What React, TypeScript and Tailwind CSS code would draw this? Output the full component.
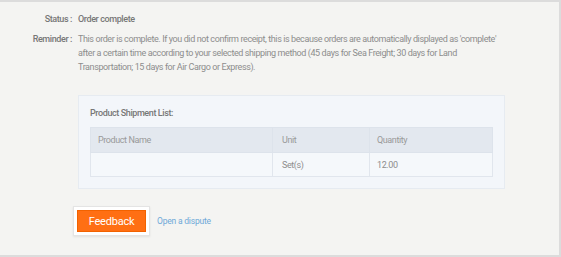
import React from 'react';

const rows = [{ name: '', unit: 'Set(s)', qty: '12.00' }];

export default function App() {
  return (
    <div
      className="w-[561px] h-[257px] bg-[#f4f4f2] border-t-2 border-r-2 border-b-2 border-[#dcdcdc] text-[9px] tracking-[-0.4px] leading-[14px] text-[#8d8d8d]"
      style={{ fontFamily: 'Roboto, "Liberation Sans", sans-serif' }}
    >
      <div className="pt-[10px] pr-[24px]">
        {/* status */}
        <div className="flex">
          <div className="w-[78px] shrink-0 text-right pr-[6px] text-[#777] font-medium">Status :</div>
          <div className="font-medium text-[#777]">Order complete</div>
        </div>
        <div className="flex mt-[6px]">
          <div className="w-[78px] shrink-0 text-right pr-[6px] text-[#777] font-medium">Reminder :</div>
          <div className="whitespace-nowrap">
            This order is complete. If you did not confirm receipt, this is because orders are automatically displayed as 'complete'
            <br />
            after a certain time according to your selected shipping method (45 days for Sea Freight; 30 days for Land
            <br />
            Transportation; 15 days for Air Cargo or Express).
          </div>
        </div>

        {/* shipment list */}
        <div className="ml-[78px] mt-[21px] w-[427px] bg-[#f3f6fa] border border-[#e6ebf1] px-[11px] pt-[10px] pb-[11px]">
          <div className="font-medium text-[#777]">Product Shipment List:</div>
          <table className="mt-[7px] w-full border-collapse">
            <thead>
              <tr className="bg-[#e3e8ef] h-[25px]">
                <th className="w-[182px] text-left font-normal pl-[7px] border border-[#dde3eb] text-[#999]">Product Name</th>
                <th className="w-[97px] text-left font-normal pl-[9px] border border-[#dde3eb] text-[#999]">Unit</th>
                <th className="text-left font-normal pl-[7px] border border-[#dde3eb] text-[#999]">Quantity</th>
              </tr>
            </thead>
            <tbody>
              {rows.map((r, i) => (
                <tr key={i} className="h-[24px] bg-[#f5f8fb]">
                  <td className="pl-[7px] border border-[#e1e6ed]">{r.name}</td>
                  <td className="pl-[9px] border border-[#e1e6ed]">{r.unit}</td>
                  <td className="pl-[7px] border border-[#e1e6ed]">{r.qty}</td>
                </tr>
              ))}
            </tbody>
          </table>
        </div>

        {/* actions */}
        <div className="flex items-center ml-[73px] mt-[17px]">
          <div className="bg-white p-[3px] border border-[#e4e4e4] shadow-[0_1px_2px_rgba(0,0,0,0.08)]">
            <button className="w-[69px] h-[22px] bg-[#ff6f13] border border-[#f26200] text-white text-[11px] tracking-[-0.2px] leading-none">
              Feedback
            </button>
          </div>
          <a className="ml-[7px] text-[8.5px] tracking-[-0.2px] text-[#6ea8d8] cursor-pointer">Open a dispute</a>
        </div>
      </div>
    </div>
  );
}
